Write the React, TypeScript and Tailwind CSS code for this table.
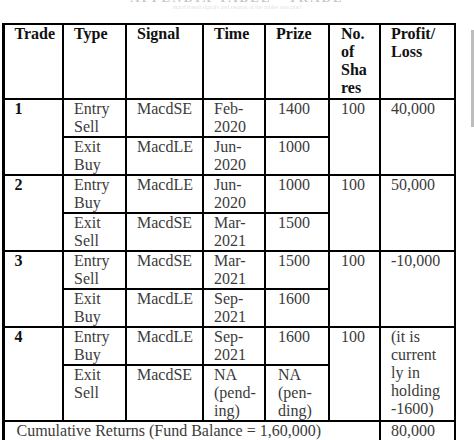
import React from "react";

type Leg = { type: [string, string]; signal: string; time: string[]; prize: string[] };
type Trade = { no: string; legs: [Leg, Leg]; shares: string; pl: string[] };

const TRADES: Trade[] = [
  {
    no: "1",
    legs: [
      { type: ["Entry", "Sell"], signal: "MacdSE", time: ["Feb-", "2020"], prize: ["1400"] },
      { type: ["Exit", "Buy"], signal: "MacdLE", time: ["Jun-", "2020"], prize: ["1000"] },
    ],
    shares: "100",
    pl: ["40,000"],
  },
  {
    no: "2",
    legs: [
      { type: ["Entry", "Buy"], signal: "MacdLE", time: ["Jun-", "2020"], prize: ["1000"] },
      { type: ["Exit", "Sell"], signal: "MacdSE", time: ["Mar-", "2021"], prize: ["1500"] },
    ],
    shares: "100",
    pl: ["50,000"],
  },
  {
    no: "3",
    legs: [
      { type: ["Entry", "Sell"], signal: "MacdSE", time: ["Mar-", "2021"], prize: ["1500"] },
      { type: ["Exit", "Buy"], signal: "MacdLE", time: ["Sep-", "2021"], prize: ["1600"] },
    ],
    shares: "100",
    pl: ["-10,000"],
  },
  {
    no: "4",
    legs: [
      { type: ["Entry", "Buy"], signal: "MacdLE", time: ["Sep-", "2021"], prize: ["1600"] },
      { type: ["Exit", "Sell"], signal: "MacdSE", time: ["NA", "(pend-", "ing)"], prize: ["NA", "(pen-", "ding)"] },
    ],
    shares: "100",
    pl: ["(it is", "current", "ly in", "holding", "-1600)"],
  },
];

const cell = "border-2 border-black align-top p-0 pl-[10px] pr-[2px]";

function Lines({ items }: { items: string[] }) {
  return (
    <>
      {items.map((t, i) => (
        <span key={i} className="block whitespace-nowrap">
          {t}
        </span>
      ))}
    </>
  );
}

export default function App() {
  return (
    <div className="w-[474px] h-[440px] overflow-hidden bg-white font-['Liberation_Serif','Times_New_Roman',serif] text-[16px] leading-[18px]">
      {/* faded caption cut off by the crop */}
      <div className="h-[23px] overflow-hidden flex justify-center">
        <div className="-mt-[9px] flex flex-col items-center">
          <span className="text-[13px] leading-[13px] font-bold tracking-[2px] text-[#c9c9c9] blur-[0.6px]">
            APPENDIX TABLE - TRADE
          </span>
          <span className="text-[6px] leading-[6px] text-[#e2e2e2] blur-[0.5px]">
            macd based signals and returns of the trades executed
          </span>
        </div>
      </div>

      <div className="flex items-start">
        <table className="w-[454px] table-fixed border-collapse ml-[1.5px] border-l-[3px] border-black">
          <colgroup>
            <col className="w-[60px]" />
            <col className="w-[63px]" />
            <col className="w-[77px]" />
            <col className="w-[62px]" />
            <col className="w-[64px]" />
            <col className="w-[51px]" />
            <col />
          </colgroup>
          <thead>
            <tr className="h-[75px] font-bold text-[#111]">
              <th className={`${cell} text-left border-l-[3px]`}>Trade</th>
              <th className={`${cell} text-left`}>Type</th>
              <th className={`${cell} text-left`}>Signal</th>
              <th className={`${cell} text-left`}>Time</th>
              <th className={`${cell} text-left`}>Prize</th>
              <th className={`${cell} text-left pl-[11px]`}>
                <Lines items={["No.", "of", "Sha", "res"]} />
              </th>
              <th className={`${cell} text-left`}>
                <Lines items={["Profit/", "Loss"]} />
              </th>
            </tr>
          </thead>
          <tbody className="text-[#3b3b3b]">
            {TRADES.map((t) =>
              t.legs.map((leg, i) => (
                <tr key={t.no + i} className={i === 1 && t.no === "4" ? "h-[56px]" : "h-[38px]"}>
                  {i === 0 && (
                    <td rowSpan={2} className={`${cell} border-l-[3px] font-bold text-[#111]`}>
                      {t.no}
                    </td>
                  )}
                  <td className={cell}>
                    <Lines items={leg.type} />
                  </td>
                  <td className={cell}>{leg.signal}</td>
                  <td className={cell}>
                    <Lines items={leg.time} />
                  </td>
                  <td className={`${cell} pl-[12px]`}>
                    <Lines items={leg.prize} />
                  </td>
                  {i === 0 && (
                    <>
                      <td rowSpan={2} className={`${cell} pl-[11px]`}>
                        {t.shares}
                      </td>
                      <td rowSpan={2} className={cell}>
                        <Lines items={t.pl} />
                      </td>
                    </>
                  )}
                </tr>
              ))
            )}
            <tr className="h-[19px]">
              <td colSpan={6} className={`${cell} border-l-[3px] border-b-[3px] pl-[12px] whitespace-nowrap`}>
                Cumulative Returns (Fund Balance = 1,60,000)
              </td>
              <td className={`${cell} border-b-[3px]`}>80,000</td>
            </tr>
          </tbody>
        </table>
        <div className="ml-auto mt-[7px] w-[3px] h-[97px] bg-[#bdbdbd]" />
      </div>
    </div>
  );
}
